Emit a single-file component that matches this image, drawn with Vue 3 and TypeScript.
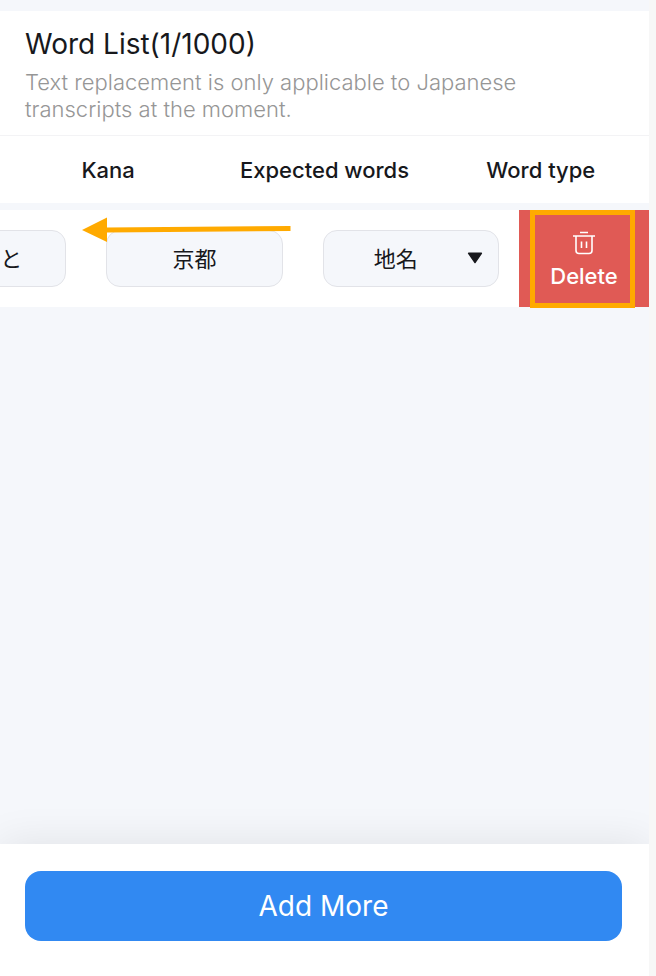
<script setup lang="ts">
import { computed, ref } from 'vue'

interface WordEntry {
  id: number
  kana: string
  expected: string
  type: string
}

const limit = 1000
const columns = ['Kana', 'Expected words', 'Word type']
const wordTypes = ['地名', '人名', '名詞']

const words = ref<WordEntry[]>([{ id: 1, kana: 'きょうと', expected: '京都', type: '地名' }])

const title = computed(() => `Word List(${words.value.length}/${limit})`)

function removeWord(id: number): void {
  words.value = words.value.filter((word) => word.id !== id)
}

function addWord(): void {
  if (words.value.length >= limit) return
  words.value.push({ id: Date.now(), kana: '', expected: '', type: wordTypes[0] })
}
</script>

<template>
  <div class="page">
    <main class="screen">
      <header class="intro">
        <h1 class="title">{{ title }}</h1>
        <p class="note">Text replacement is only applicable to Japanese transcripts at the moment.</p>
      </header>

      <table class="words">
        <thead>
          <tr class="head-row">
            <th v-for="column in columns" :key="column" scope="col">{{ column }}</th>
          </tr>
        </thead>
        <tbody>
          <tr v-for="(word, index) in words" :key="word.id" class="word-row">
            <td class="cell">
              <input v-model="word.kana" class="field" type="text" aria-label="Kana" />
            </td>
            <td class="cell">
              <input v-model="word.expected" class="field" type="text" aria-label="Expected words" />
            </td>
            <td class="cell">
              <select v-model="word.type" class="field picker" aria-label="Word type">
                <option v-for="type in wordTypes" :key="type" :value="type">{{ type }}</option>
              </select>
              <svg class="caret" viewBox="0 0 16 12" aria-hidden="true">
                <path d="M1.6 1.300h12.800L8 10.600z" fill="#17181c" stroke="#17181c" stroke-width="1.4" stroke-linejoin="round" />
              </svg>
            </td>
            <td class="action">
              <button class="delete" type="button" @click="removeWord(word.id)">
                <svg class="trash" viewBox="0 0 24 24" fill="none" stroke="#fff" stroke-width="1.6" aria-hidden="true">
                  <path d="M8 1.5h8M1 5h22M4 5v14.500a3 3 0 0 0 3 3h10a3 3 0 0 0 3-3V5M9.500 10.500v6.500M14.500 10.500v6.500" />
                </svg>
                <span>Delete</span>
              </button>
              <span v-if="index === 0" class="highlight"></span>
            </td>
            <td v-if="index === 0" class="swipe-hint" aria-hidden="true">
              <svg class="swipe-arrow" viewBox="0 0 209 26">
                <path d="M0 13 25 .5v10L208.500 9v5L25 15.500V25z" fill="#ffaa00" />
              </svg>
            </td>
          </tr>
        </tbody>
      </table>

      <footer class="bar">
        <button class="add" type="button" @click="addWord">Add More</button>
      </footer>
    </main>
  </div>
</template>

<style>
body {
  margin: 0;
  background: #f7f7f7;
}
</style>

<style scoped>
.page {
  box-sizing: border-box;
  min-height: 100vh;
  padding-right: 7px;
  display: flex;
  font-family: Inter, "Noto Sans CJK JP", sans-serif;
  color: #17181c;
}

.screen {
  flex: 1;
  min-width: 0;
  display: flex;
  flex-direction: column;
  padding-top: 11px;
  background: #f5f7fb;
  overflow: hidden;
}

.intro {
  padding: 15px 25px 12px;
  background: #fff;
  border-bottom: 1px solid #f3f3f5;
}

.title {
  margin: 0 0 7px;
  font-size: 28px;
  line-height: 36px;
  font-weight: 400;
}

.note {
  max-width: 520px;
  margin: 0;
  font-size: 22px;
  line-height: 27px;
  font-weight: 300;
  color: #969696;
}

.words,
.words thead,
.words tbody {
  display: block;
}

.head-row {
  display: flex;
  margin-bottom: 7px;
  background: #fff;
}

.head-row th {
  flex: 1;
  padding: 21px 0 19px;
  font-size: 22px;
  line-height: 27px;
  font-weight: 500;
  text-align: center;
}

.word-row {
  position: relative;
  display: flex;
  justify-content: flex-end;
  background: #fff;
}

.cell {
  position: relative;
  box-sizing: border-box;
  flex: none;
  width: calc(100% / 3);
  padding: 20px;
}

.field {
  display: block;
  box-sizing: border-box;
  width: 100%;
  height: 57px;
  margin: 0;
  padding: 0 12px 3px;
  border: 1px solid #e2e3e8;
  border-radius: 14px;
  background: #f5f7fb;
  color: inherit;
  font-family: "Noto Sans CJK JP", sans-serif;
  font-size: 22px;
  font-weight: 400;
  text-align: center;
}

.picker {
  appearance: none;
  padding-right: 42px;
  text-align-last: center;
}

.caret {
  position: absolute;
  top: 42px;
  right: 36px;
  width: 16px;
  height: 12px;
  pointer-events: none;
}

.action {
  position: relative;
  flex: none;
  width: 130px;
  padding: 0;
  display: flex;
}

.delete {
  flex: 1;
  display: flex;
  flex-direction: column;
  align-items: center;
  justify-content: center;
  gap: 8px;
  padding: 3px 0 0;
  border: 0;
  background: #e05a55;
  color: #fff;
  font-family: inherit;
  font-size: 22px;
  line-height: 27px;
  font-weight: 500;
}

.trash {
  width: 24px;
  height: 24px;
}

.highlight {
  position: absolute;
  inset: 0 14px -1px 11px;
  border: 5px solid #ffaa00;
  pointer-events: none;
}

.swipe-hint {
  position: absolute;
  top: 7px;
  left: 82px;
  padding: 0;
  pointer-events: none;
}

.swipe-arrow {
  display: block;
  width: 209px;
  height: 26px;
}

.bar {
  margin-top: auto;
  padding: 27px 27px 35px 25px;
  background: #fff;
  box-shadow: 0 0 40px rgba(0, 0, 0, 0.09);
}

.add {
  display: block;
  width: 100%;
  padding: 17px;
  border: 0;
  border-radius: 16px;
  background: #3189f2;
  color: #fff;
  font-family: inherit;
  font-size: 28px;
  line-height: 36px;
  font-weight: 400;
}
</style>
